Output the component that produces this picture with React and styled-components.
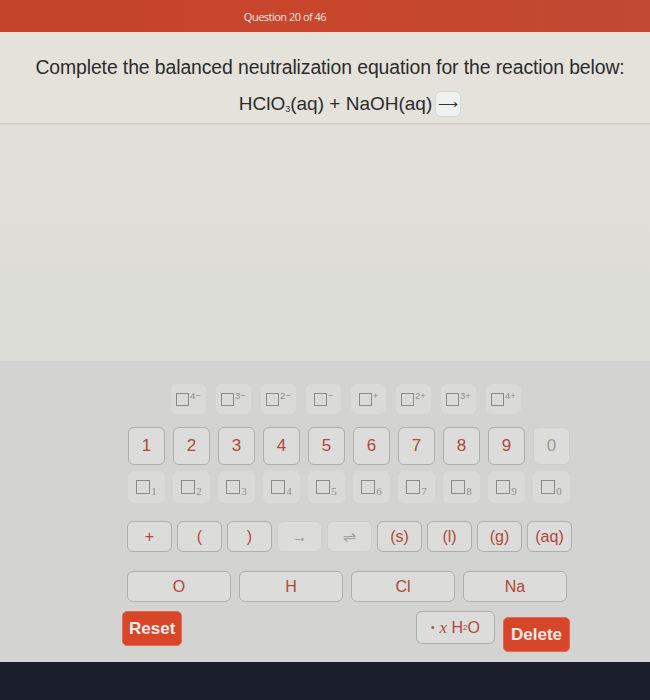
import React from 'react'
import styled, { createGlobalStyle, css } from 'styled-components'

const Global = createGlobalStyle`
  html, body {
    margin: 0;
    padding: 0;
    background: #1b202b;
  }
  body {
    font-family: "Liberation Sans", Arial, sans-serif;
  }
`

const charges = ['4−', '3−', '2−', '−', '+', '2+', '3+', '4+']
const digits = ['1', '2', '3', '4', '5', '6', '7', '8', '9', '0']
const symbols = [
  { label: '+', on: true },
  { label: '(', on: true },
  { label: ')', on: true },
  { label: '→', on: false },
  { label: '⇌', on: false },
  { label: '(s)', on: true },
  { label: '(l)', on: true },
  { label: '(g)', on: true },
  { label: '(aq)', on: true },
]
const elements = ['O', 'H', 'Cl', 'Na']

const App = () => (
  <Page>
    <Global />
    <Header>
      <HeaderTitle>Question 20 of 46</HeaderTitle>
    </Header>
    <Prompt>
      <PromptText>
        Complete the balanced neutralization equation for the reaction below:
      </PromptText>
      <Equation>
        HClO<Sub>3</Sub>(aq) + NaOH(aq)
        <AnswerSlot>⟶</AnswerSlot>
      </Equation>
    </Prompt>
    <Blank />
    <Keypad>
      <KeyRow gap={10} indent={43}>
        {charges.map((c) => (
          <GhostKey key={c} w={35} h={30}>
            <Square size={13} />
            <ChargeMark>{c}</ChargeMark>
          </GhostKey>
        ))}
      </KeyRow>
      <KeyRow gap={8} top={13}>
        {digits.map((d) => (
          <Key key={d} w={37} h={38} off={d === '0'} size={17}>
            {d}
          </Key>
        ))}
      </KeyRow>
      <KeyRow gap={8} top={6}>
        {digits.map((d) => (
          <GhostKey key={d} w={37} h={32}>
            <Square size={14} />
            <SubMark>{d}</SubMark>
          </GhostKey>
        ))}
      </KeyRow>
      <KeyRow gap={5} top={18} indent={-1}>
        {symbols.map((s) => (
          <Key key={s.label} w={45} h={31} off={!s.on} size={16}>
            {s.label}
          </Key>
        ))}
      </KeyRow>
      <KeyRow gap={8} top={19} indent={-1}>
        {elements.map((e) => (
          <Key key={e} w={104} h={31} size={16}>
            {e}
          </Key>
        ))}
      </KeyRow>
      <ActionRow>
        <RedButton>Reset</RedButton>
        <Spacer />
        <Key w={79} h={33} size={16}>
          <Dot>•</Dot>
          <Italic>x</Italic>&nbsp;H<SmallSub>2</SmallSub>O
        </Key>
        <RedButton wide>Delete</RedButton>
      </ActionRow>
    </Keypad>
    <BottomBar />
  </Page>
)

export default App

const Page = styled.div`
  width: 650px;
  height: 700px;
  display: flex;
  flex-direction: column;
  overflow: hidden;
  background: #d8d8d5;
`

const Header = styled.div`
  height: 32px;
  flex: 0 0 32px;
  display: flex;
  align-items: center;
  justify-content: center;
  padding-right: 80px;
  background: linear-gradient(90deg, #c2432a 0%, #c8462c 50%, #c04a33 100%);
`

const HeaderTitle = styled.span`
  font-family: "Open Sans", sans-serif;
  font-size: 11px;
  color: #f4e6e2;
  letter-spacing: -0.5px;
`

const Prompt = styled.div`
  flex: 0 0 92px;
  display: flex;
  flex-direction: column;
  align-items: center;
  padding-top: 24px;
  box-sizing: border-box;
  background: #e4e2da;
  border-bottom: 1px solid #c9c8c1;
`

const PromptText = styled.div`
  font-size: 19.4px;
  color: #2c2c2c;
  letter-spacing: -0.1px;
  margin-left: 10px;
`

const Equation = styled.div`
  margin-top: 12px;
  margin-left: 50px;
  display: flex;
  align-items: center;
  font-size: 19px;
  color: #2c2c2c;
`

const Sub = styled.span`
  font-size: 9px;
  align-self: flex-end;
  margin-bottom: 3px;
`

const AnswerSlot = styled.span`
  width: 24px;
  height: 24px;
  margin-left: 3px;
  display: flex;
  align-items: center;
  justify-content: center;
  border: 1.5px solid #d3d9db;
  border-radius: 6px;
  background: #eef2f1;
  font-size: 14px;
  color: #333;
`

const Blank = styled.div`
  flex: 0 0 237px;
  background: linear-gradient(180deg, #e0dfd9 0%, #dcdcd7 100%);
`

const Keypad = styled.div`
  flex: 1 1 auto;
  display: flex;
  flex-direction: column;
  padding: 23px 0 0 128px;
  box-sizing: border-box;
  background: #d3d3d1;
`

const KeyRow = styled.div`
  display: flex;
  gap: ${(p) => p.gap}px;
  margin-top: ${(p) => p.top || 0}px;
  margin-left: ${(p) => p.indent || 0}px;
`

const keyBase = css`
  width: ${(p) => p.w}px;
  height: ${(p) => p.h}px;
  flex: 0 0 ${(p) => p.w}px;
  box-sizing: border-box;
  display: flex;
  align-items: center;
  justify-content: center;
  border-radius: 6px;
`

const Key = styled.div`
  ${keyBase};
  border: 1.5px solid ${(p) => (p.off ? '#cfcfcd' : '#aeaeac')};
  background: #dcdcda;
  font-size: ${(p) => p.size}px;
  color: ${(p) => (p.off ? '#9a9a98' : '#b0483a')};
`

const GhostKey = styled.div`
  ${keyBase};
  background: #dadad8;
  color: #8f8f8d;
`

const Square = styled.span`
  width: ${(p) => p.size}px;
  height: ${(p) => p.size}px;
  border: 1.5px solid #8a8a88;
  box-sizing: border-box;
`

const ChargeMark = styled.span`
  font-size: 9.5px;
  margin-left: 1px;
  align-self: flex-start;
  margin-top: 6px;
  color: #8f8f8d;
`

const SubMark = styled.span`
  font-family: "Liberation Serif", serif;
  font-size: 11px;
  margin-left: 1px;
  align-self: flex-end;
  margin-bottom: 6px;
`

const ActionRow = styled.div`
  display: flex;
  align-items: flex-start;
  gap: 8px;
  margin-top: 9px;
  margin-left: -6px;
  width: 448px;
`

const Spacer = styled.div`
  flex: 1 1 auto;
`

const RedButton = styled.div`
  height: 33px;
  padding: 0 ${(p) => (p.wide ? 7 : 6)}px;
  margin-top: ${(p) => (p.wide ? 6 : 0)}px;
  display: flex;
  align-items: center;
  border-radius: 5px;
  background: #d8462a;
  border: 1px solid #e06a52;
  color: #f8ece8;
  font-size: 17px;
  font-weight: bold;
`

const Dot = styled.span`
  font-size: 10px;
  margin-right: 5px;
`

const Italic = styled.span`
  font-family: "Liberation Serif", serif;
  font-style: italic;
  font-size: 17px;
`

const SmallSub = styled.sub`
  font-size: 8px;
  vertical-align: -1px;
`

const BottomBar = styled.div`
  flex: 0 0 38px;
  background: #1a1f2b;
`
